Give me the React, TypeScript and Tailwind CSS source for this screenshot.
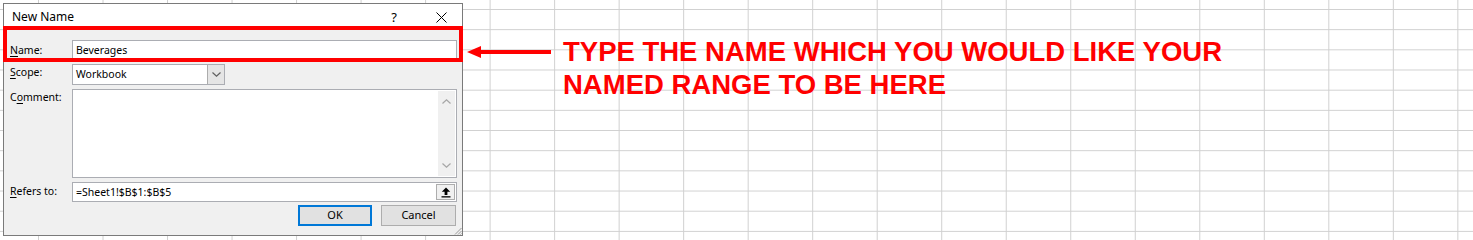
import React from "react";

function ChevronDown({ color = "#606060" }: { color?: string }) {
  return (
    <svg width="9" height="5" viewBox="0 0 9 5">
      <path d="M0.5 0.5 L4.5 4.2 L8.5 0.5" fill="none" stroke={color} strokeWidth="1.2" />
    </svg>
  );
}

function ChevronUp({ color = "#a6a6a6" }: { color?: string }) {
  return (
    <svg width="9" height="5" viewBox="0 0 9 5">
      <path d="M0.5 4.5 L4.5 0.8 L8.5 4.5" fill="none" stroke={color} strokeWidth="1.2" />
    </svg>
  );
}

export default function App() {
  return (
    <div className="relative w-[1473px] h-[240px] overflow-hidden bg-white [background-image:linear-gradient(to_right,#d0d0d0_1px,transparent_1px),linear-gradient(to_bottom,#d0d0d0_1px,transparent_1px)] [background-size:64.53px_20.18px] [background-position:38px_9px]">
      <div className="flex items-start">
        {/* Dialog */}
        <div className="ml-[3px] mt-[3px] w-[460px] h-[233px] border border-[#7a7a7a] bg-[#f0f0f0] flex flex-col font-['Noto_Sans',sans-serif] text-black">
          {/* Title bar */}
          <div className="h-[24px] bg-white flex items-center pl-[8px] pr-[15px] pt-[3px]">
            <span className="text-[12px] leading-none">New Name</span>
            <span className="ml-auto text-[13px] leading-none mr-[39px]">?</span>
            <svg width="11" height="11" viewBox="0 0 11 11">
              <path d="M0.5 0.5 L10.5 10.5 M10.5 0.5 L0.5 10.5" stroke="#000" strokeWidth="1" />
            </svg>
          </div>

          {/* Body */}
          <div className="flex flex-col pl-[6px] pr-[5px] pt-[13px] text-[10.5px]">
            {/* Name */}
            <div className="flex h-[20px]">
              <div className="w-[62px] pt-[3px] leading-[14px]">
                <span className="underline underline-offset-[2px]">N</span>ame:
              </div>
              <div className="flex-1 bg-white border border-[#abadb3] flex items-center pl-[3px] pt-[2px]">
                Beverages
              </div>
            </div>

            {/* Scope */}
            <div className="flex h-[21px] mt-[4px]">
              <div className="w-[62px] pt-[1px] leading-[14px]">
                <span className="underline underline-offset-[2px]">S</span>cope:
              </div>
              <div className="w-[153px] bg-white border border-[#abadb3] flex items-stretch">
                <div className="flex-1 flex items-center pl-[3px] pt-[1px]">Workbook</div>
                <div className="w-[17px] bg-[#e5e5e5] border-l border-[#acacac] flex items-center justify-center">
                  <ChevronDown />
                </div>
              </div>
            </div>

            {/* Comment */}
            <div className="flex h-[89px] mt-[4px]">
              <div className="w-[62px] pt-[1px] leading-[14px]">
                C<span className="underline underline-offset-[2px]">o</span>mment:
              </div>
              <div className="flex-1 bg-white border border-[#abadb3] flex justify-end p-px">
                <div className="w-[17px] bg-[#f0f0f0] flex flex-col items-center justify-between py-[8px]">
                  <ChevronUp />
                  <ChevronDown color="#a6a6a6" />
                </div>
              </div>
            </div>

            {/* Refers to */}
            <div className="flex h-[20px] mt-[4px]">
              <div className="w-[62px] pt-[2px] leading-[14px]">
                <span className="underline underline-offset-[2px]">R</span>efers to:
              </div>
              <div className="flex-1 bg-white border border-[#abadb3] flex items-center pl-[3px] pr-px">
                <span className="flex-1 pt-[1px]">=Sheet1!$B$1:$B$5</span>
                <div className="w-[19px] h-[16px] bg-[#f0f0f0] border border-[#adadad] flex items-center justify-center">
                  <svg width="10" height="11" viewBox="0 0 10 11">
                    <path d="M5 0.5 L0.8 4.8 H3.6 V8 H6.4 V4.8 H9.2 Z" fill="#000" />
                    <rect x="0.5" y="9.2" width="9" height="1.3" fill="#000" />
                  </svg>
                </div>
              </div>
            </div>

            {/* Buttons */}
            <div className="flex justify-end gap-[9px] mt-[3px] pr-px">
              <div className="w-[74px] h-[21px] bg-[#e1e1e1] border-2 border-[#0078d7] flex items-center justify-center text-[11px]">
                OK
              </div>
              <div className="w-[75px] h-[21px] bg-[#e1e1e1] border border-[#adadad] flex items-center justify-center text-[11px]">
                Cancel
              </div>
            </div>

            {/* Resize grip */}
            <div className="flex justify-end -mr-[5px] mt-[1px]">
              <svg width="8" height="8" viewBox="0 0 8 8">
                <path d="M7.5 1 L1 7.5 M7.5 4 L4 7.5 M7.5 6.5 L6.5 7.5" stroke="#9a9a9a" strokeWidth="1" />
              </svg>
            </div>
          </div>
        </div>

        {/* Arrow */}
        <svg className="ml-[4px] mt-[44px]" width="84" height="16" viewBox="0 0 84 16">
          <path d="M0 8 L14 2 L14 14 Z" fill="#ff0000" />
          <rect x="12" y="6" width="72" height="4" fill="#ff0000" />
        </svg>

        {/* Annotation text */}
        <div className="ml-[12px] mt-[35px] font-['Liberation_Sans',Arial,sans-serif] font-bold text-[27.5px] leading-[33px] text-[#ff0000]">
          <div>TYPE THE NAME WHICH YOU WOULD LIKE YOUR</div>
          <div>NAMED RANGE TO BE HERE</div>
        </div>
      </div>

      {/* Red highlight box over the Name row */}
      <div className="absolute left-[3px] top-[26px] w-[460px] h-[36px] border-4 border-[#ff0000]" />
    </div>
  );
}
